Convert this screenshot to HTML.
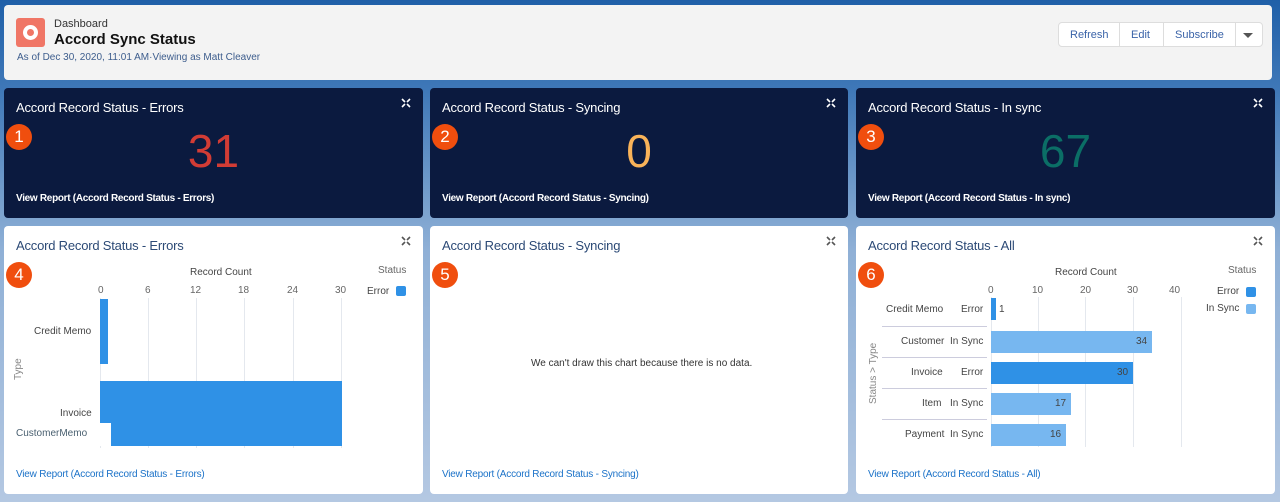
<!DOCTYPE html>
<html><head><style>
*{margin:0;padding:0;box-sizing:border-box}
body{width:1280px;height:502px;overflow:hidden;font-family:"Liberation Sans",sans-serif;background:linear-gradient(180deg,#1f5fa8 0,#3f78b8 90px,#8fb0d6 250px,#b4c8e2 502px);position:relative}
.a{position:absolute}
.card{position:absolute;border-radius:4px}
.dark{background:#0b1a3f}
.white{background:#fff}
.t{position:absolute;left:12px;top:12px;font-size:13px;letter-spacing:-0.2px}
.badge{position:absolute;width:26px;height:26px;border-radius:13px;background:#f04e0e;color:#fff;font-size:17px;text-align:center;line-height:26px}
.exp{position:absolute;right:12px;top:10px;width:10px;height:10px}
.big{position:absolute;width:100%;text-align:center;top:36px;font-size:46px}
.vr{position:absolute;left:12px;font-size:10px;font-weight:bold;color:#fff;letter-spacing:-0.3px}
.lnk{position:absolute;left:12px;font-size:10px;color:#1b72c8;letter-spacing:-0.2px}
.s{font-size:10px;color:#444;position:absolute}
.g{position:absolute;width:1px;background:#e4e8ee}
</style></head><body>
<div class="card" style="left:4px;top:5px;width:1268px;height:75px;background:#f3f3f3">
 <div class="a" style="left:12px;top:13px;width:29px;height:29px;background:#f07666;border-radius:3px"><div class="a" style="left:7px;top:7px;width:15px;height:15px;border-radius:8px;background:#fff"><div class="a" style="left:4px;top:4px;width:7px;height:7px;border-radius:4px;background:#f07666"></div></div></div>
 <div class="a" style="left:50px;top:13px;font-size:11px;color:#333">Dashboard</div>
 <div class="a" style="left:50px;top:26px;font-size:15px;font-weight:bold;color:#111">Accord Sync Status</div>
 <div class="a" style="left:13px;top:47px;font-size:10px;color:#3d5d8d">As of Dec 30, 2020, 11:01 AM·Viewing as Matt Cleaver</div>
 <div class="a" style="left:1054px;top:17px;width:205px;height:25px;background:#fff;border:1px solid #ddd;border-radius:4px;font-size:11px;color:#3a63a8">
  <span class="a" style="left:11px;top:6px">Refresh</span>
  <div class="a" style="left:60px;top:0;width:1px;height:23px;background:#ddd"></div>
  <span class="a" style="left:72px;top:6px">Edit</span>
  <div class="a" style="left:104px;top:0;width:1px;height:23px;background:#ddd"></div>
  <span class="a" style="left:116px;top:6px">Subscribe</span>
  <div class="a" style="left:176px;top:0;width:1px;height:23px;background:#ddd"></div>
  <span class="a" style="left:184px;top:10px;width:0;height:0;border-left:5px solid transparent;border-right:5px solid transparent;border-top:5px solid #555"></span>
 </div>
</div>

<div class="card dark" style="left:4px;top:88px;width:419px;height:130px">
 <div class="t" style="color:#fff">Accord Record Status - Errors</div><svg class="exp" viewBox="0 0 10 10" stroke="#fff" stroke-width="1.6"><path d="M1 1L4 4M9 1L6 4M1 9L4 6M9 9L6 6"/></svg>
 <div class="badge" style="left:2px;top:36px">1</div>
 <div class="big" style="color:#d23c35">31</div>
 <div class="vr" style="top:105px">View Report (Accord Record Status - Errors)</div>
</div>
<div class="card dark" style="left:430px;top:88px;width:418px;height:130px">
 <div class="t" style="color:#fff">Accord Record Status - Syncing</div><svg class="exp" viewBox="0 0 10 10" stroke="#fff" stroke-width="1.6"><path d="M1 1L4 4M9 1L6 4M1 9L4 6M9 9L6 6"/></svg>
 <div class="badge" style="left:2px;top:36px">2</div>
 <div class="big" style="color:#f9b359">0</div>
 <div class="vr" style="top:105px">View Report (Accord Record Status - Syncing)</div>
</div>
<div class="card dark" style="left:856px;top:88px;width:419px;height:130px">
 <div class="t" style="color:#fff">Accord Record Status - In sync</div><svg class="exp" viewBox="0 0 10 10" stroke="#fff" stroke-width="1.6"><path d="M1 1L4 4M9 1L6 4M1 9L4 6M9 9L6 6"/></svg>
 <div class="badge" style="left:2px;top:36px">3</div>
 <div class="big" style="color:#0b6e66">67</div>
 <div class="vr" style="top:105px">View Report (Accord Record Status - In sync)</div>
</div>

<div class="card white" style="left:4px;top:226px;width:419px;height:268px">
 <div class="t" style="color:#2c4a76">Accord Record Status - Errors</div><svg class="exp" viewBox="0 0 10 10" stroke="#555" stroke-width="1.6"><path d="M1 1L4 4M9 1L6 4M1 9L4 6M9 9L6 6"/></svg>
 <div class="badge" style="left:2px;top:36px">4</div>
</div>
<div class="s" style="left:190px;top:267px">Record Count</div>
<div class="s" style="left:378px;top:265px;color:#666">Status</div>
<div class="s" style="left:367px;top:286px">Error</div>
<div class="a" style="left:396px;top:286px;width:10px;height:10px;background:#2f91e6;border-radius:2px"></div>
<div class="g" style="left:100px;top:298px;height:150px"></div><div class="g" style="left:148px;top:298px;height:150px"></div><div class="g" style="left:196px;top:298px;height:150px"></div><div class="g" style="left:244px;top:298px;height:150px"></div><div class="g" style="left:293px;top:298px;height:150px"></div><div class="g" style="left:341px;top:298px;height:150px"></div>
<div class="s" style="left:98px;top:285px;color:#666">0</div><div class="s" style="left:145px;top:285px;color:#666">6</div><div class="s" style="left:190px;top:285px;color:#666">12</div><div class="s" style="left:238px;top:285px;color:#666">18</div><div class="s" style="left:287px;top:285px;color:#666">24</div><div class="s" style="left:335px;top:285px;color:#666">30</div>
<div class="a" style="left:100px;top:299px;width:8px;height:65px;background:#2f91e6"></div>
<div class="a" style="left:100px;top:381px;width:242px;height:65px;background:#2f91e6"></div>
<div class="a" style="left:99px;top:423px;width:12px;height:23px;background:#fff"></div>
<div class="s" style="left:34px;top:326px">Credit Memo</div>
<div class="s" style="left:60px;top:408px">Invoice</div>
<div class="s" style="left:16px;top:428px;color:#4a6070">CustomerMemo</div>
<div class="s" style="left:13px;top:380px;color:#888;transform:rotate(-90deg);transform-origin:left top">Type</div>
<div class="lnk" style="left:16px;top:469px">View Report (Accord Record Status - Errors)</div>

<div class="card white" style="left:430px;top:226px;width:418px;height:268px">
 <div class="t" style="color:#2c4a76">Accord Record Status - Syncing</div><svg class="exp" viewBox="0 0 10 10" stroke="#555" stroke-width="1.6"><path d="M1 1L4 4M9 1L6 4M1 9L4 6M9 9L6 6"/></svg>
 <div class="badge" style="left:2px;top:36px">5</div>
 <div class="s" style="left:101px;top:132px;color:#333">We can't draw this chart because there is no data.</div>
 <div class="lnk" style="top:243px">View Report (Accord Record Status - Syncing)</div>
</div>

<div class="card white" style="left:856px;top:226px;width:419px;height:268px">
 <div class="t" style="color:#2c4a76">Accord Record Status - All</div><svg class="exp" viewBox="0 0 10 10" stroke="#555" stroke-width="1.6"><path d="M1 1L4 4M9 1L6 4M1 9L4 6M9 9L6 6"/></svg>
 <div class="badge" style="left:2px;top:36px">6</div>
 <div class="lnk" style="top:243px">View Report (Accord Record Status - All)</div>
</div>
<div class="s" style="left:1055px;top:267px">Record Count</div>
<div class="s" style="left:1228px;top:265px;color:#666">Status</div>
<div class="s" style="left:1217px;top:286px">Error</div><div class="a" style="left:1246px;top:287px;width:10px;height:10px;background:#2f91e6;border-radius:2px"></div>
<div class="s" style="left:1206px;top:303px">In Sync</div><div class="a" style="left:1246px;top:304px;width:10px;height:10px;background:#77b7f0;border-radius:2px"></div>
<div class="s" style="left:988px;top:285px;color:#666">0</div><div class="s" style="left:1032px;top:285px;color:#666">10</div><div class="s" style="left:1080px;top:285px;color:#666">20</div><div class="s" style="left:1127px;top:285px;color:#666">30</div><div class="s" style="left:1169px;top:285px;color:#666">40</div>
<div class="g" style="left:991px;top:297px;height:150px"></div><div class="g" style="left:1038px;top:297px;height:150px"></div><div class="g" style="left:1085px;top:297px;height:150px"></div><div class="g" style="left:1133px;top:297px;height:150px"></div><div class="g" style="left:1181px;top:297px;height:150px"></div>
<div class="a" style="left:991px;top:298px;width:5px;height:22px;background:#2f91e6"></div><div class="s" style="left:999px;top:304px">1</div>
<div class="a" style="left:991px;top:331px;width:161px;height:22px;background:#77b7f0"></div><div class="s" style="left:1136px;top:336px">34</div>
<div class="a" style="left:991px;top:362px;width:142px;height:22px;background:#2f91e6"></div><div class="s" style="left:1117px;top:367px">30</div>
<div class="a" style="left:991px;top:393px;width:80px;height:22px;background:#77b7f0"></div><div class="s" style="left:1055px;top:398px">17</div>
<div class="a" style="left:991px;top:424px;width:75px;height:22px;background:#77b7f0"></div><div class="s" style="left:1050px;top:429px">16</div>
<div class="s" style="left:886px;top:304px">Credit Memo</div><div class="s" style="left:961px;top:304px">Error</div>
<div class="s" style="left:901px;top:336px">Customer</div><div class="s" style="left:950px;top:336px">In Sync</div>
<div class="s" style="left:911px;top:367px">Invoice</div><div class="s" style="left:961px;top:367px">Error</div>
<div class="s" style="left:922px;top:398px">Item</div><div class="s" style="left:950px;top:398px">In Sync</div>
<div class="s" style="left:905px;top:429px">Payment</div><div class="s" style="left:950px;top:429px">In Sync</div>
<div class="a" style="left:882px;top:326px;width:105px;height:1px;background:#ccd"></div>
<div class="a" style="left:882px;top:357px;width:105px;height:1px;background:#ccd"></div>
<div class="a" style="left:882px;top:388px;width:105px;height:1px;background:#ccd"></div>
<div class="a" style="left:882px;top:419px;width:105px;height:1px;background:#ccd"></div>
<div class="s" style="left:868px;top:404px;color:#888;transform:rotate(-90deg);transform-origin:left top;white-space:nowrap">Status &gt; Type</div>
</body></html>
